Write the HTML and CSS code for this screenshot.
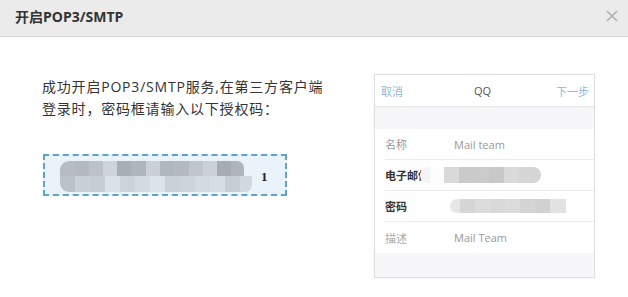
FILE: index.html
```html
<!DOCTYPE html>
<html lang="zh">
<head>
    <meta charset="UTF-8">
    <meta name="viewport" content="width=device-width, initial-scale=1.0">
    <title>开启POP3/SMTP</title>
    <link rel="stylesheet" href="styles.css">
</head>
<body>
    <div class="dialog">
        <div class="dialog-header">
            <span class="dialog-title">开启POP3/SMTP</span>
            <svg class="dialog-close" width="12" height="12" viewBox="0 0 12 12">
                <path d="M1 1 L11 11 M11 1 L1 11" stroke="#b0b0b0" stroke-width="1.6" fill="none"/>
            </svg>
        </div>

        <div class="dialog-body">
            <div class="intro">
                <p class="intro-text">成功开启POP3/SMTP服务,在第三方客户端<br>登录时，密码框请输入以下授权码：</p>
                <div class="code-box">
                    <div class="code-mask">
                        <div class="mask-row top">
                            <i></i><i></i><i></i><i></i><i></i><i></i><i></i><i></i><i></i><i></i><i></i><i></i><i></i><i></i>
                        </div>
                        <div class="mask-row bottom">
                            <i></i><i></i><i></i><i></i><i></i><i></i><i></i><i></i><i></i><i></i><i></i><i></i><i></i>
                        </div>
                    </div>
                    <span class="code-tail">1</span>
                </div>
            </div>

            <div class="phone">
                <div class="phone-nav">
                    <span class="nav-link">取消</span>
                    <span class="nav-title">QQ</span>
                    <span class="nav-link">下一步</span>
                </div>
                <div class="phone-gap"></div>
                <div class="phone-row">
                    <span class="row-label">名称</span>
                    <span class="row-value">Mail team</span>
                </div>
                <div class="phone-row">
                    <span class="row-label strong">电子邮件</span>
                    <span class="row-blur email"><i></i><i></i><i></i><i></i><i></i><i></i><i></i><i></i></span>
                </div>
                <div class="phone-row">
                    <span class="row-label strong">密码</span>
                    <span class="row-blur pass"><i></i><i></i><i></i><i></i><i></i><i></i><i></i><i></i></span>
                </div>
                <div class="phone-row last">
                    <span class="row-label light">描述</span>
                    <span class="row-value">Mail Team</span>
                </div>
                <div class="phone-foot"></div>
            </div>
        </div>
    </div>
</body>
</html>
```

FILE: styles.css
```css
body {
    margin: 0;
    padding: 0;
    background-color: #fff;
    font-family: 'Open Sans', 'Noto Sans CJK SC', sans-serif;
    color: #333;
}

.dialog {
    width: 628px;
    height: 297px;
    overflow: hidden;
}

.dialog-header {
    height: 37px;
    background-color: #ebebeb;
    border-bottom: 1px solid #d6d6d6;
    display: flex;
    align-items: center;
    justify-content: space-between;
    padding: 0 10px 0 15px;
    box-sizing: border-box;
}

.dialog-title {
    font-size: 14px;
    font-weight: bold;
    color: #333;
    margin-top: -4px;
}

.dialog-close {
    margin-top: -4px;
}

.dialog-body {
    display: flex;
    align-items: flex-start;
    padding: 37px 0 0 42px;
}

.intro {
    width: 332px;
    padding-top: 2px;
}

.intro-text {
    margin: 0;
    font-size: 14px;
    line-height: 22px;
    letter-spacing: 0.8px;
    color: #333;
}

.code-box {
    margin-top: 34px;
    margin-left: 1px;
    width: 244px;
    height: 42px;
    box-sizing: border-box;
    border: 2px dashed #5ea3c8;
    background-color: #e9f3f9;
    display: flex;
    align-items: center;
    padding-left: 15px;
}

.code-mask {
    width: 198px;
    height: 31px;
    margin-top: 3px;
    border-radius: 9px 0 8px 9px;
    overflow: hidden;
    filter: blur(0.6px);
}

.mask-row {
    display: flex;
    height: 15px;
}

.mask-row.bottom {
    height: 16px;
}

.mask-row i {
    display: block;
    width: 15px;
    height: 100%;
}

.mask-row.top i:nth-child(1) { background: #b6bcc1; }
.mask-row.top i:nth-child(2) { background: #b4bac0; }
.mask-row.top i:nth-child(3) { background: #bcc2c7; }
.mask-row.top i:nth-child(4) { background: #ced5da; }
.mask-row.top i:nth-child(5) { background: #a7aeb4; }
.mask-row.top i:nth-child(6) { background: #aeb5bb; }
.mask-row.top i:nth-child(7) { background: #cad0d5; }
.mask-row.top i:nth-child(8) { background: #b0b7bd; }
.mask-row.top i:nth-child(9) { background: #b4bac0; }
.mask-row.top i:nth-child(10) { background: #c0c6cb; }
.mask-row.top i:nth-child(11) { background: #cbd1d6; }
.mask-row.top i:nth-child(12) { background: #a6acb2; }
.mask-row.top i:nth-child(13) { background: #afb5ba; width: 13px; border-radius: 0 7px 0 0; }
.mask-row.top i:nth-child(14) { background: #e9f3f9; }

.mask-row.bottom i:nth-child(1) { background: #bac3ca; }
.mask-row.bottom i:nth-child(2) { background: #c9d1d8; }
.mask-row.bottom i:nth-child(3) { background: #c6ced5; }
.mask-row.bottom i:nth-child(4) { background: #dae2e9; }
.mask-row.bottom i:nth-child(5) { background: #ccd4db; }
.mask-row.bottom i:nth-child(6) { background: #d4dce3; }
.mask-row.bottom i:nth-child(7) { background: #dce3ea; }
.mask-row.bottom i:nth-child(8) { background: #cad2d9; }
.mask-row.bottom i:nth-child(9) { background: #cdd5dc; }
.mask-row.bottom i:nth-child(10) { background: #d3dbe2; }
.mask-row.bottom i:nth-child(11) { background: #d6dee5; }
.mask-row.bottom i:nth-child(12) { background: #c7cfd6; }
.mask-row.bottom i:nth-child(13) { background: #d1d9e0; width: 12px; border-radius: 0 0 7px 0; }

.code-tail {
    font-family: 'Liberation Serif', serif;
    font-weight: bold;
    font-size: 13px;
    color: #222;
    margin-left: 3px;
    margin-top: 3px;
}

.phone {
    width: 221px;
    height: 204px;
    box-sizing: border-box;
    border: 1px solid #dedede;
    box-shadow: 0 0 2px rgba(0, 0, 0, 0.06);
    display: flex;
    flex-direction: column;
    font-size: 11px;
}

.phone-nav {
    height: 31px;
    flex-shrink: 0;
    display: flex;
    align-items: center;
    justify-content: space-between;
    padding: 0 5px 0 6px;
    border-bottom: 1px solid #e6e6e6;
}

.nav-link {
    color: #8fb8de;
    font-size: 11px;
}

.nav-title {
    color: #555;
    font-size: 11px;
    margin-left: 6px;
}

.phone-gap {
    height: 22px;
    flex-shrink: 0;
    background-color: #f7f7f9;
}

.phone-row {
    height: 31px;
    flex-shrink: 0;
    margin-left: 10px;
    border-bottom: 1px solid #ebebeb;
    display: flex;
    align-items: center;
    box-sizing: border-box;
}

.phone-row.last {
    border-bottom: none;
}

.row-label {
    width: 69px;
    color: #999;
    font-size: 11px;
    white-space: nowrap;
    overflow: hidden;
}

.row-label.strong {
    color: #333;
    font-weight: bold;
}

.row-label.light {
    color: #aaa;
}

.row-value {
    color: #999;
    font-size: 11px;
}

.row-blur {
    display: flex;
    height: 14px;
    overflow: hidden;
    filter: blur(0.7px);
}

.row-blur i {
    display: block;
    width: 15px;
    height: 100%;
}

.row-blur.email {
    margin-left: -34px;
    height: 16px;
    border-radius: 7px;
}

.row-blur.email i:nth-child(1) { background: #f4f4f4; width: 10px; border-radius: 7px 0 0 7px; }
.row-blur.email i:nth-child(2) { background: #fdfdfd; width: 14px; }
.row-blur.email i:nth-child(3) { background: #d9d9d9; }
.row-blur.email i:nth-child(4) { background: #cacaca; }
.row-blur.email i:nth-child(5) { background: #cbcbcb; }
.row-blur.email i:nth-child(6) { background: #c8c8c8; }
.row-blur.email i:nth-child(7) { background: #dadada; }
.row-blur.email i:nth-child(8) { background: #d6d6d6; width: 22px; border-radius: 0 7px 7px 0; }

.row-blur.pass {
    margin-left: -4px;
    border-radius: 7px 0 0 7px;
}

.row-blur.pass i:nth-child(1) { background: #e6e6e6; width: 10px; }
.row-blur.pass i:nth-child(2) { background: #d6d6d6; }
.row-blur.pass i:nth-child(3) { background: #dcdcdc; }
.row-blur.pass i:nth-child(4) { background: #d9d9d9; }
.row-blur.pass i:nth-child(5) { background: #dcdcdc; }
.row-blur.pass i:nth-child(6) { background: #d4d4d4; }
.row-blur.pass i:nth-child(7) { background: #d1d1d1; }
.row-blur.pass i:nth-child(8) { background: #e2e2e2; width: 16px; }

.phone-foot {
    flex: 1;
    background-color: #f7f7f9;
}
```
